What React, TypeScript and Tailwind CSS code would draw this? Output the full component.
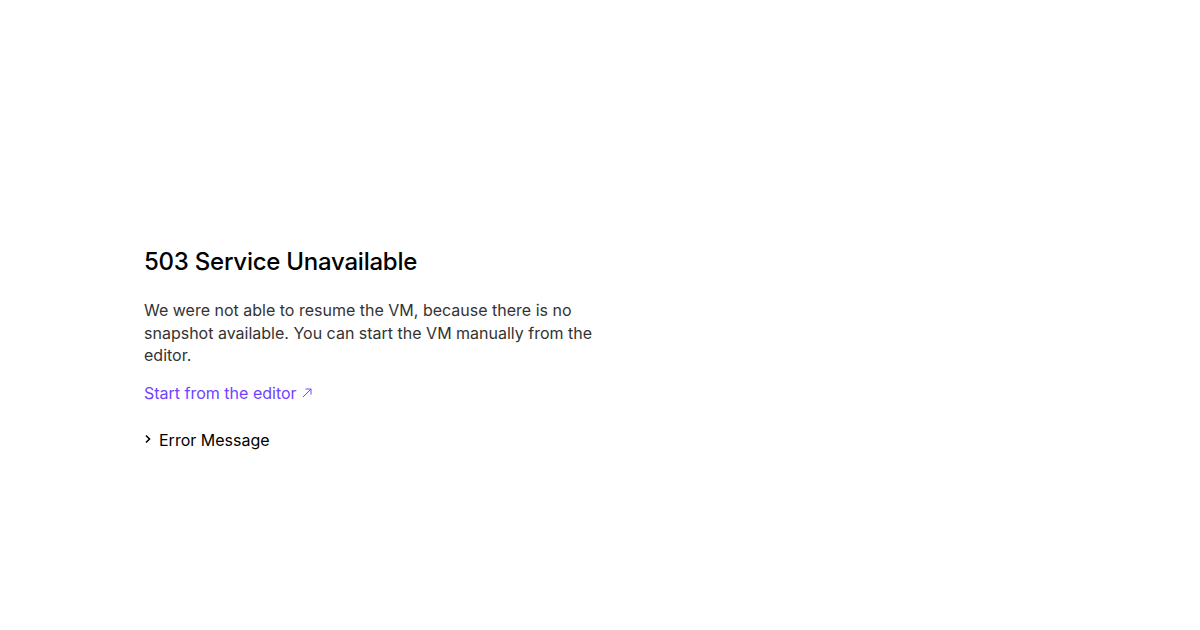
import React from "react";

export default function App() {
  return (
    <div
      className="h-[630px] w-full bg-white flex flex-col justify-center pt-[68px]"
      style={{ fontFamily: "Inter, 'Noto Sans', sans-serif" }}
    >
      <div className="ml-[144px] w-[480px] flex flex-col">
        <h1 className="text-[24px] leading-8 font-medium text-black tracking-[-0.01em]">
          503 Service Unavailable
        </h1>
        <p className="mt-[21px] text-[16px] leading-[22.5px] text-[#333333]">
          We were not able to resume the VM, because there is no snapshot
          available. You can start the VM manually from the editor.
        </p>
        <a
          href="#"
          className="mt-[14px] text-[16px] leading-6 text-[#6e44ff] flex items-center gap-1"
        >
          Start from the editor
          <svg width="12" height="12" viewBox="0 0 12 12" fill="none" className="mt-[1px]">
            <path d="M2 10 L10 2 M4.5 2 H10 V7.5" stroke="#6e44ff" strokeWidth="1" />
          </svg>
        </a>
        <div className="mt-[23px] flex items-center gap-[7px] text-[16px] leading-6 text-black">
          <svg width="8" height="10" viewBox="0 0 8 10" fill="none" className="-mt-[1px]">
            <path d="M2 1.5 L5.5 5 L2 8.5" stroke="black" strokeWidth="1.6" />
          </svg>
          Error Message
        </div>
      </div>
    </div>
  );
}
